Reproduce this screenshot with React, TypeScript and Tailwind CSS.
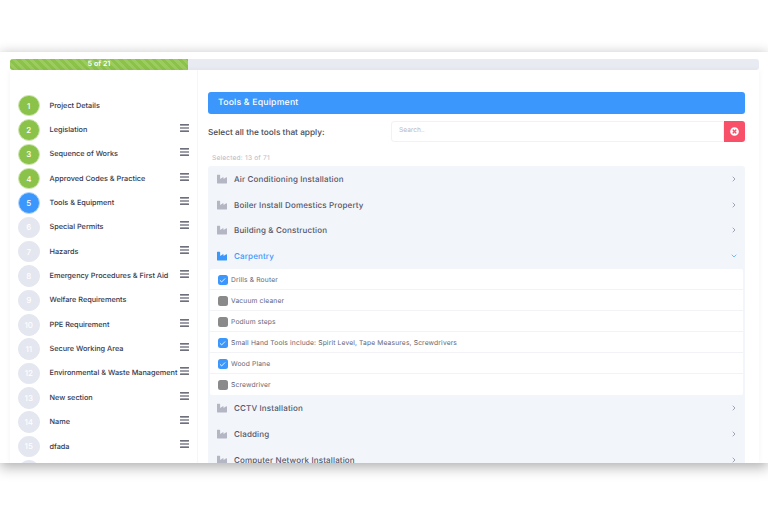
import { Check, ChevronDown, ChevronRight } from "lucide-react";
import { FaIndustry, FaTimesCircle } from "react-icons/fa";

type Step = { id: number; label: string; status: "done" | "current" | "todo" };

const steps: Step[] = [
	{ id: 1, label: "Project Details", status: "done" },
	{ id: 2, label: "Legislation", status: "done" },
	{ id: 3, label: "Sequence of Works", status: "done" },
	{ id: 4, label: "Approved Codes & Practice", status: "done" },
	{ id: 5, label: "Tools & Equipment", status: "current" },
	{ id: 6, label: "Special Permits", status: "todo" },
	{ id: 7, label: "Hazards", status: "todo" },
	{ id: 8, label: "Emergency Procedures & First Aid", status: "todo" },
	{ id: 9, label: "Welfare Requirements", status: "todo" },
	{ id: 10, label: "PPE Requirement", status: "todo" },
	{ id: 11, label: "Secure Working Area", status: "todo" },
	{ id: 12, label: "Environmental & Waste Management", status: "todo" },
	{ id: 13, label: "New section", status: "todo" },
	{ id: 14, label: "Name", status: "todo" },
	{ id: 15, label: "dfada", status: "todo" },
];

const tools = [
	{ label: "Drills & Router", checked: true },
	{ label: "Vacuum cleaner", checked: false },
	{ label: "Podium steps", checked: false },
	{ label: "Small Hand Tools include: Spirit Level, Tape Measures, Screwdrivers", checked: true },
	{ label: "Wood Plane", checked: true },
	{ label: "Screwdriver", checked: false },
];

function Bars() {
	return (
		<svg width="9" height="8" viewBox="0 0 9 8" className="shrink-0 -mt-[4px]">
			<path d="M0.4 0.8h8.2M0.4 4h8.2M0.4 7.2h8.2" stroke="#3f4152" strokeWidth="1.2" strokeLinecap="round" />
		</svg>
	);
}

function SideStep({ step }: { step: Step }) {
	const circle =
		step.status === "done"
			? "bg-[#8bc34a] border-[#cfe6b2]"
			: step.status === "current"
				? "bg-[#3b97fc] border-[#b5d7fd]"
				: "bg-[#e4e6f0] border-[#e4e6f0]";

	return (
		<div className="flex h-[24.35px] shrink-0 items-center">
			<div
				className={`flex h-[21.5px] w-[21.5px] shrink-0 items-center justify-center rounded-full border text-[8px] font-medium text-white ${circle}`}
			>
				{step.id}
			</div>
			<span className="ml-[10px] flex-1 whitespace-nowrap pt-[1px] text-[7.3px] font-medium text-[#34364a]">
				{step.label}
			</span>
			{step.id > 1 && <Bars />}
		</div>
	);
}

function Section({ label, open }: { label: string; open?: boolean }) {
	return (
		<div
			className={`flex h-[25.8px] shrink-0 items-center pl-[9px] pr-[7px] ${open ? "text-[#3b97fc]" : "text-[#55566a]"}`}
		>
			<FaIndustry className={`h-[10px] w-[10px] ${open ? "text-[#3b97fc]" : "text-[#b5b6c4]"}`} />
			<span className="ml-[7px] flex-1 text-[8px] font-medium tracking-[0.15px]">{label}</span>
			{open ? (
				<ChevronDown className="h-[8px] w-[8px] text-[#3b97fc]" />
			) : (
				<ChevronRight className="h-[8px] w-[8px] text-[#777a8c]" />
			)}
		</div>
	);
}

function ToolRow({ label, checked }: { label: string; checked: boolean }) {
	return (
		<div className="flex h-[21px] items-center border-b border-[#f1f3f7] pl-[8px] pt-[2px] last:border-b-0 last:pt-[1px]">
			<div
				className={`flex h-[9.5px] w-[9.5px] items-center justify-center rounded-[2.5px] ${checked ? "bg-[#3b97fc]" : "bg-[#8a8a8a]"}`}
			>
				{checked && <Check className="h-[7px] w-[7px] text-white" strokeWidth={3} />}
			</div>
			<span className="ml-[3.5px] text-[6.7px] tracking-[0.15px] text-[#626370]">{label}</span>
		</div>
	);
}

export default function App() {
	return (
		<div className="h-[516px] w-[768px] overflow-hidden bg-white pt-[52px] font-['Inter',sans-serif] [text-rendering:geometricPrecision]">
			<div className="flex h-[411px] flex-col overflow-hidden bg-white pl-[10px] pr-[9px] pt-[6.5px] shadow-[0_5px_12px_rgba(0,0,0,0.28),0_-3px_10px_rgba(0,0,0,0.07)]">
				<div className="flex h-[11px] shrink-0 overflow-hidden rounded-[3px] bg-[#e8ebf2]">
					<div className="flex w-[178px] items-center justify-center bg-[repeating-linear-gradient(45deg,#8bc34a_0,#8bc34a_3px,#9ccb5f_3px,#9ccb5f_6px)] pt-[1px] text-[7.2px] font-semibold text-white">
						5 of 21
					</div>
				</div>

				<div className="flex min-h-0 flex-1 shadow-[0_0_6px_rgba(0,0,0,0.05)]">
					<aside className="flex w-[188px] shrink-0 flex-col overflow-hidden border-r border-[#f5f6f9] pl-[8px] pr-[8px] pt-[24px]">
						{steps.map((step) => (
							<SideStep key={step.id} step={step} />
						))}
						<div className="flex h-[24.35px] shrink-0 items-center">
							<div className="h-[21.5px] w-[21.5px] rounded-full bg-[#e4e6f0]" />
						</div>
					</aside>

					<main className="flex min-w-0 flex-1 flex-col overflow-hidden pl-[10px] pr-[14px] pt-[22px]">
						<div className="flex h-[22px] shrink-0 items-center rounded-[3px] bg-[#3b97fc] pl-[10px] pt-[1.5px] text-[8.7px] font-medium tracking-[0.2px] text-white">
							Tools &amp; Equipment
						</div>

						<div className="mt-[7px] flex h-[21px] shrink-0 items-center">
							<span className="w-[183px] shrink-0 pt-[5px] text-[8.3px] font-medium text-[#4a4b55]">
								Select all the tools that apply:
							</span>
							<div className="flex h-full flex-1 items-center rounded-l-[3px] border border-[#f1f2f6] pl-[7px] text-[6.6px] text-[#b9bbc8]">
								Search..
							</div>
							<div className="flex h-full w-[21px] items-center justify-center rounded-r-[3px] bg-[#f9506a]">
								<FaTimesCircle className="h-[9px] w-[9px] text-white" />
							</div>
						</div>

						<div className="mt-[12px] h-[12px] shrink-0 pl-[4px] text-[6.6px] leading-[9px] tracking-[0.2px] text-[#b9bbc8]">
							Selected: 13 of 71
						</div>

						<div className="flex flex-1 flex-col overflow-hidden rounded-t-[3px] bg-[#f2f5f9] pt-[0.5px]">
							<Section label="Air Conditioning Installation" />
							<Section label="Boiler Install Domestics Property" />
							<Section label="Building & Construction" />
							<Section label="Carpentry" open />
							<div className="mx-[2px] shrink-0 rounded-[2px] bg-white">
								{tools.map((tool) => (
									<ToolRow key={tool.label} label={tool.label} checked={tool.checked} />
								))}
							</div>
							<Section label="CCTV Installation" />
							<Section label="Cladding" />
							<Section label="Computer Network Installation" />
						</div>
					</main>
				</div>
			</div>
		</div>
	);
}
